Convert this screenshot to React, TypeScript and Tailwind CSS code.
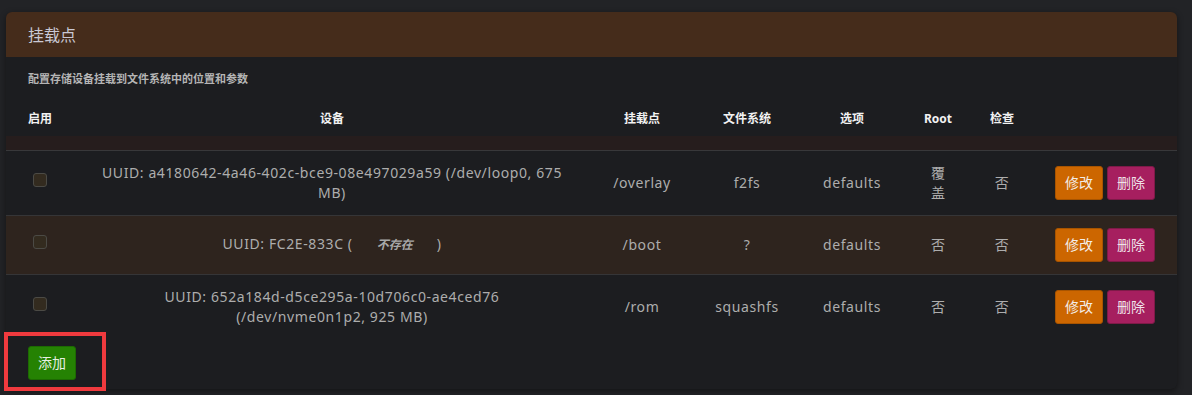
import React from 'react';

type Mount = {
  device: React.ReactNode;
  target: string;
  fs: string;
  options: string;
  root: string;
  check: string;
  missing?: boolean;
};

const MOUNTS: Mount[] = [
  {
    device: 'UUID: a4180642-4a46-402c-bce9-08e497029a59 (/dev/loop0, 675 MB)',
    target: '/overlay',
    fs: 'f2fs',
    options: 'defaults',
    root: '覆盖',
    check: '否',
  },
  {
    device: (
      <>
        UUID: FC2E-833C (
        <em className="px-[24px] text-[12px] font-bold tracking-normal text-[#a8a8a8]">不存在</em>)
      </>
    ),
    target: '/boot',
    fs: '?',
    options: 'defaults',
    root: '否',
    check: '否',
    missing: true,
  },
  {
    device: 'UUID: 652a184d-d5ce295a-10d706c0-ae4ced76 (/dev/nvme0n1p2, 925 MB)',
    target: '/rom',
    fs: 'squashfs',
    options: 'defaults',
    root: '否',
    check: '否',
  },
];

const COLS = 'grid grid-cols-[66px_520px_100px_110px_100px_72px_56px_1fr]';

export default function App() {
  return (
    <div
      className="min-h-[395px] w-[1192px] bg-[#222326] pt-3 pl-[6px]"
      style={{ fontFamily: '"Noto Sans", "Noto Sans CJK SC", sans-serif' }}
    >
      <div className="relative w-[1171px] rounded-md bg-[#1c1d20] shadow-[0_2px_6px_rgba(0,0,0,0.45)]">
        {/* 标题 */}
        <div className="flex h-[45px] items-center rounded-t-md bg-[#452c1b] px-[22px] text-[16px] text-[#c9c8d4]">
          挂载点
        </div>

        <p className="px-[22px] pt-[14px] text-[11px] font-semibold text-[#b5b5b5]">
          配置存储设备挂载到文件系统中的位置和参数
        </p>

        {/* 表头 */}
        <div className={`${COLS} mt-[22px] items-center pb-[8px] text-[12px] font-bold text-[#f2f2f2]`}>
          <div className="pl-[22px]">启用</div>
          <div className="text-center">设备</div>
          <div className="text-center">挂载点</div>
          <div className="text-center">文件系统</div>
          <div className="text-center">选项</div>
          <div className="text-center">Root</div>
          <div className="text-center">检查</div>
          <div />
        </div>
        <div className="h-[15px] border-b border-[#38383a] bg-[#261d1d]" />

        {/* 行 */}
        {MOUNTS.map((m, i) => (
          <div
            key={i}
            className={`${COLS} items-center border-b border-[#353537] py-3 text-[14px] leading-5 tracking-[0.6px] text-[#adadad] ${
              m.missing ? 'bg-[#2e241e]' : ''
            } ${i === MOUNTS.length - 1 ? 'border-b-0' : ''}`}
          >
            <div className="flex pb-[5px] pl-[27px]">
              <span className="h-[14px] w-[14px] rounded-[3px] border border-[#4b4a45] bg-[#332b1f]" />
            </div>
            <div className="px-[27px] text-center">{m.device}</div>
            <div className="text-center">{m.target}</div>
            <div className="text-center">{m.fs}</div>
            <div className="text-center">{m.options}</div>
            <div className="flex justify-center">
              <span className="w-[16px] break-all text-center tracking-normal">{m.root}</span>
            </div>
            <div className="text-center">{m.check}</div>
            <div className="flex justify-end gap-1 pr-[22px] tracking-normal">
              <button className="h-[34px] w-[48px] rounded-[3px] border border-[#a85400] bg-[#cc6600] text-[14px] text-[#f3ece6]">
                修改
              </button>
              <button className="h-[34px] w-[48px] rounded-[3px] border border-[#7e1a48] bg-[#a61f5f] text-[14px] text-[#efe3ea]">
                删除
              </button>
            </div>
          </div>
        ))}

        {/* 添加 */}
        <div className="px-[22px] pt-[7px] pb-[9px]">
          <button className="h-[34px] w-[48px] rounded-[3px] border border-[#1d6a02] bg-[#258203] text-[14px] text-[#e6efe2]">
            添加
          </button>
        </div>

        {/* 标注框 */}
        <div className="pointer-events-none absolute bottom-[-2px] left-[-2px] h-[59px] w-[102px] border-4 border-[#f03a3e]" />
      </div>
    </div>
  );
}
